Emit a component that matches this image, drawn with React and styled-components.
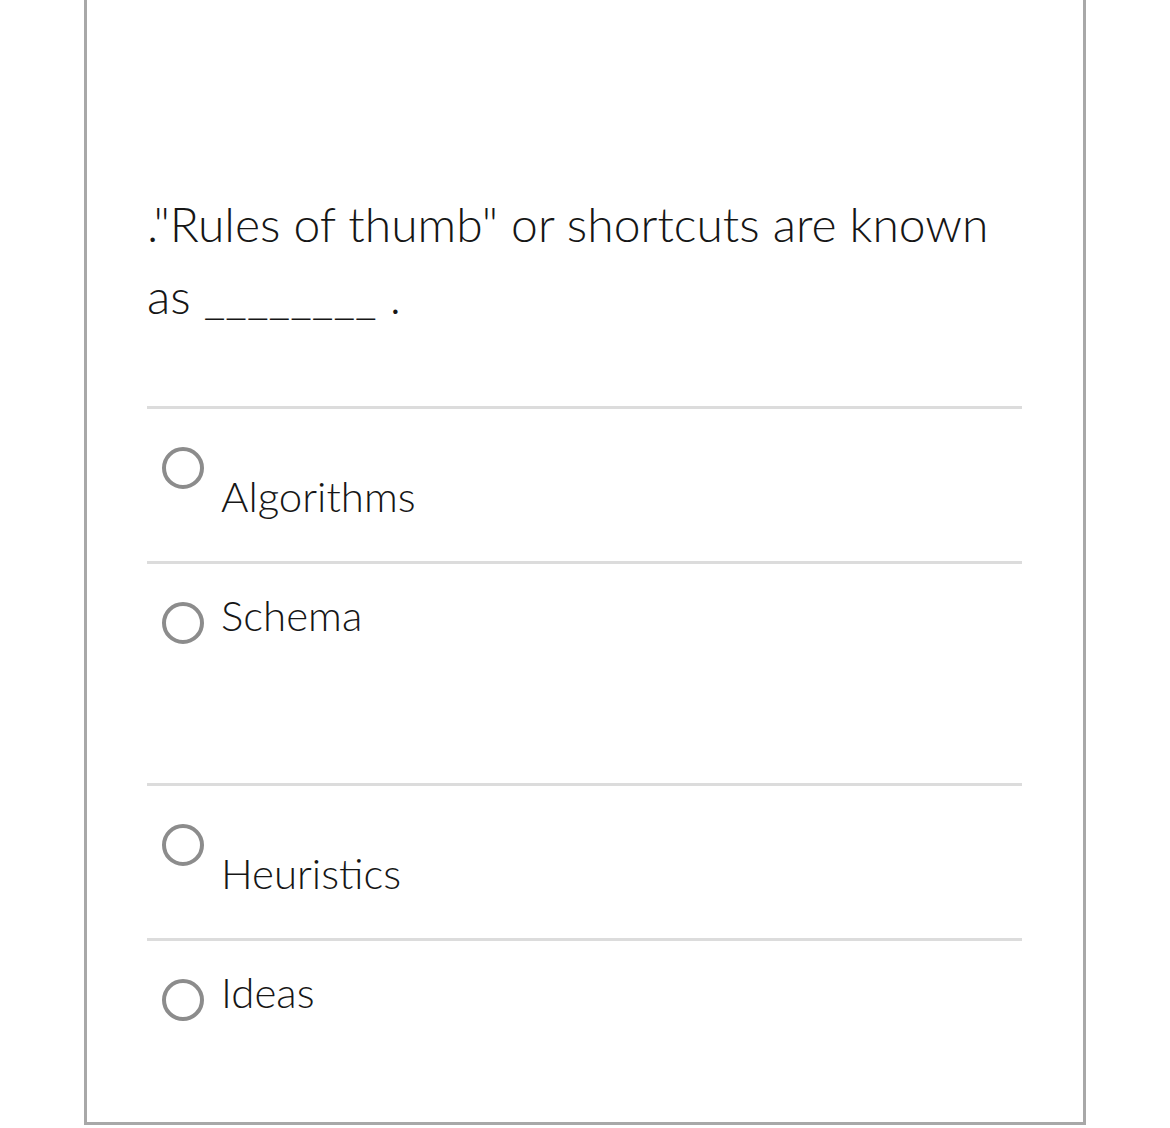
import styled, { createGlobalStyle } from "styled-components";

const GlobalStyle = createGlobalStyle`
  html, body {
    margin: 0;
    padding: 0;
    background: #fff;
  }
  body {
    font-family: Lato, "Noto Sans", sans-serif;
    color: #161616;
  }
`;

const Card = styled.div`
  box-sizing: border-box;
  width: 1002px;
  margin-left: 84px;
  padding: 188px 61px 61px 60px;
  border: 3px solid #a8a8a8;
  border-top: none;
  background: #fff;
`;

const Question = styled.p`
  margin: 0 0 74px;
  font-size: 48px;
  font-weight: 300;
  line-height: 72px;
`;

const Options = styled.div`
  display: flex;
  flex-direction: column;
`;

const Row = styled.label`
  display: flex;
  align-items: flex-start;
  gap: 17px;
  padding: 26px 0 ${(p) => p.$bottom || 40}px;
  border-top: 3px solid #dcdcdc;
`;

const Radio = styled.span`
  box-sizing: border-box;
  flex: none;
  width: 42px;
  height: 42px;
  margin: 12px 0 0 15px;
  border: 4px solid #8c8c8c;
  border-radius: 50%;
`;

const Label = styled.span`
  padding-top: ${(p) => (p.$drop ? 36 : 0)}px;
  font-size: 42px;
  font-weight: 300;
  line-height: 50px;
`;

const options = [
  { text: "Algorithms", drop: true },
  { text: "Schema", bottom: 139 },
  { text: "Heuristics", drop: true },
  { text: "Ideas" },
];

export default function App() {
  return (
    <>
      <GlobalStyle />
      <Card>
        <Question>
          ."Rules of thumb" or shortcuts are known as ________ .
        </Question>
        <Options>
          {options.map((o) => (
            <Row key={o.text} $bottom={o.bottom}>
              <Radio />
              <Label $drop={o.drop}>{o.text}</Label>
            </Row>
          ))}
        </Options>
      </Card>
    </>
  );
}
